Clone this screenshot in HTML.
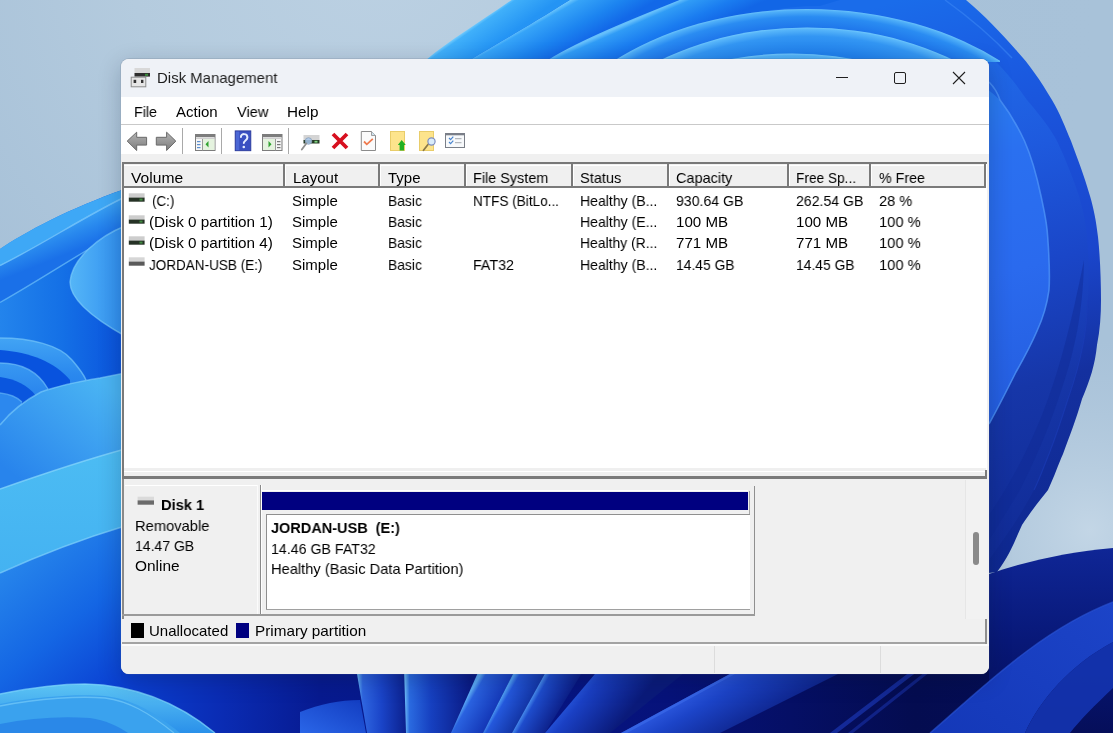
<!DOCTYPE html>
<html><head><meta charset="utf-8">
<style>
html,body{margin:0;padding:0;width:1113px;height:733px;overflow:hidden;font-family:"Liberation Sans",sans-serif;background:#a9c3da;}
#bg{position:absolute;left:0;top:0;width:1113px;height:733px;}
#win{position:absolute;left:121px;top:59px;width:868px;height:615px;border-radius:8px;overflow:hidden;background:#f0f0f0;}
#wb{position:absolute;left:120px;top:58px;width:870px;height:617px;border-radius:9px;background:rgba(60,70,90,0.2);box-shadow:0 6px 22px rgba(10,25,50,0.22);}
.t{position:absolute;white-space:pre;color:#000;will-change:transform;}
.a{position:absolute;}
</style></head><body>
<svg id="bg" width="1113" height="733" viewBox="0 0 1113 733">
<defs>
  <linearGradient id="sky" x1="0" y1="0" x2="1" y2="1">
    <stop offset="0" stop-color="#bdd2e3"/>
    <stop offset="0.5" stop-color="#b4cbde"/>
    <stop offset="1" stop-color="#bed2e3"/>
  </linearGradient>
  <linearGradient id="r1" x1="0" y1="0" x2="1" y2="0">
    <stop offset="0" stop-color="#5cbafa"/>
    <stop offset="0.3" stop-color="#3ea5f6"/>
    <stop offset="1" stop-color="#2b90f0"/>
  </linearGradient>
  <linearGradient id="r2" x1="0" y1="0" x2="1" y2="0">
    <stop offset="0" stop-color="#2f95f2"/>
    <stop offset="0.5" stop-color="#1f7de9"/>
    <stop offset="1" stop-color="#1a66e2"/>
  </linearGradient>
  <linearGradient id="domeg" x1="0" y1="0" x2="0" y2="1">
    <stop offset="0" stop-color="#2a88ee"/>
    <stop offset="1" stop-color="#1f78ea"/>
  </linearGradient>
  <linearGradient id="lb" x1="0" y1="0" x2="1" y2="0">
    <stop offset="0" stop-color="#2384ec"/>
    <stop offset="0.5" stop-color="#1470e6"/>
    <stop offset="1" stop-color="#0a52dc"/>
  </linearGradient>
  <linearGradient id="bigpet" gradientUnits="userSpaceOnUse" x1="100" y1="380" x2="20" y2="480"><stop offset="0" stop-color="#4ab4f3"/><stop offset="0.5" stop-color="#3a9cf0"/><stop offset="1" stop-color="#2884ec"/></linearGradient>
  <linearGradient id="lowl" x1="0" y1="0" x2="0.5" y2="1">
    <stop offset="0" stop-color="#2e92ee"/>
    <stop offset="0.6" stop-color="#1466e4"/>
    <stop offset="1" stop-color="#0a40d2"/>
  </linearGradient>
  <linearGradient id="bot" gradientUnits="userSpaceOnUse" x1="121" y1="0" x2="1113" y2="0"><stop offset="0" stop-color="#0a40d2"/><stop offset="0.1" stop-color="#0a2cb4"/><stop offset="0.2" stop-color="#071a90"/><stop offset="0.55" stop-color="#06127a"/><stop offset="0.8" stop-color="#040c50"/><stop offset="1" stop-color="#060e58"/></linearGradient>
  <linearGradient id="cyan" x1="0" y1="0" x2="0" y2="1">
    <stop offset="0" stop-color="#5cc4f4"/>
    <stop offset="1" stop-color="#2a90ea"/>
  </linearGradient>
  <linearGradient id="rb" x1="0" y1="0" x2="0" y2="1">
    <stop offset="0" stop-color="#0f2696"/>
    <stop offset="0.5" stop-color="#081878"/>
    <stop offset="1" stop-color="#050e5a"/>
  </linearGradient>
  <linearGradient id="ribb" x1="0" y1="1" x2="1" y2="0">
    <stop offset="0" stop-color="#1438b8"/>
    <stop offset="1" stop-color="#1c44c8"/>
  </linearGradient>
  <linearGradient id="bulge" x1="0" y1="0" x2="1" y2="0">
    <stop offset="0" stop-color="#55b6f7"/>
    <stop offset="1" stop-color="#2f8ef0"/>
  </linearGradient>
  <linearGradient id="arc1" x1="0" y1="0" x2="0" y2="1">
    <stop offset="0" stop-color="#42a4f4"/>
    <stop offset="0.4" stop-color="#2a88ee"/>
    <stop offset="1" stop-color="#1a6ee8"/>
  </linearGradient>
  <linearGradient id="arc2" x1="0" y1="0" x2="0" y2="1">
    <stop offset="0" stop-color="#3898f2"/>
    <stop offset="1" stop-color="#1a70e8"/>
  </linearGradient>
  <linearGradient id="cyanp" x1="0" y1="0" x2="0" y2="1">
    <stop offset="0" stop-color="#4cbcf3"/>
    <stop offset="1" stop-color="#3aa6f0"/>
  </linearGradient>
  <linearGradient id="outerg" x1="0" y1="0" x2="0" y2="1">
    <stop offset="0" stop-color="#1b56da"/>
    <stop offset="0.45" stop-color="#1a48d0"/>
    <stop offset="0.75" stop-color="#1536b4"/>
    <stop offset="1" stop-color="#1232a8"/>
  </linearGradient>
  <linearGradient id="midg" x1="0" y1="0" x2="0" y2="1">
    <stop offset="0" stop-color="#1e60e4"/>
    <stop offset="0.5" stop-color="#1a48cc"/>
    <stop offset="0.8" stop-color="#12309c"/>
    <stop offset="1" stop-color="#12309c"/>
  </linearGradient>
  <linearGradient id="p0" gradientUnits="userSpaceOnUse" x1="900" y1="0" x2="1050" y2="560"><stop offset="0" stop-color="#1a6cea"/><stop offset="0.15" stop-color="#1a5ce2"/><stop offset="0.3" stop-color="#1a50d8"/><stop offset="0.5" stop-color="#1a46cc"/><stop offset="0.7" stop-color="#14309f"/><stop offset="1" stop-color="#0e2890"/></linearGradient>
  <linearGradient id="p1" gradientUnits="userSpaceOnUse" x1="900" y1="0" x2="1050" y2="560"><stop offset="0" stop-color="#2080ee"/><stop offset="0.15" stop-color="#2068e6"/><stop offset="0.3" stop-color="#1e5ade"/><stop offset="0.5" stop-color="#1a46c8"/><stop offset="0.7" stop-color="#1636a8"/><stop offset="1" stop-color="#102a94"/></linearGradient>
  <linearGradient id="p2" gradientUnits="userSpaceOnUse" x1="900" y1="0" x2="1050" y2="560"><stop offset="0" stop-color="#3394f2"/><stop offset="0.15" stop-color="#2a80f0"/><stop offset="0.3" stop-color="#2a70f0"/><stop offset="0.5" stop-color="#2a6aee"/><stop offset="1" stop-color="#1e50d0"/></linearGradient>
  <linearGradient id="p3" gradientUnits="userSpaceOnUse" x1="700" y1="0" x2="1100" y2="560">
    <stop offset="0" stop-color="#48acf7"/><stop offset="0.35" stop-color="#2a70f0"/><stop offset="0.55" stop-color="#2a66ea"/><stop offset="1" stop-color="#1e50d0"/>
  </linearGradient>
  <clipPath id="topclip"><rect x="0" y="0" width="1000" height="62"/></clipPath>
  <linearGradient id="gR1" gradientUnits="userSpaceOnUse" x1="468" y1="29" x2="484" y2="52">
    <stop offset="0" stop-color="#74ccfd"/><stop offset="0.12" stop-color="#40b0fa"/><stop offset="1" stop-color="#2494f4"/>
  </linearGradient>
  <linearGradient id="gR2" gradientUnits="userSpaceOnUse" x1="520" y1="29" x2="541" y2="66">
    <stop offset="0" stop-color="#6cc6fc"/><stop offset="0.1" stop-color="#36a4f8"/><stop offset="0.6" stop-color="#1c84f0"/><stop offset="1" stop-color="#1268e8"/>
  </linearGradient>
  <linearGradient id="gR3" gradientUnits="userSpaceOnUse" x1="614" y1="29" x2="628" y2="61">
    <stop offset="0" stop-color="#66c0fb"/><stop offset="0.12" stop-color="#309cf6"/><stop offset="0.6" stop-color="#1a7cf0"/><stop offset="1" stop-color="#1266e6"/>
  </linearGradient>
  <radialGradient id="gDA" gradientUnits="userSpaceOnUse" cx="807" cy="200" r="191" gradientTransform="translate(807 200) scale(1.476 1) translate(-807 -200)">
    <stop offset="0.88" stop-color="#1a6ee8"/><stop offset="0.96" stop-color="#2a8cf2"/><stop offset="0.99" stop-color="#4eaef8"/><stop offset="1" stop-color="#6ac2fb"/>
  </radialGradient>
  <radialGradient id="gDB" gradientUnits="userSpaceOnUse" cx="807" cy="200" r="172.5" gradientTransform="translate(807 200) scale(1.45 1) translate(-807 -200)">
    <stop offset="0.85" stop-color="#2080ec"/><stop offset="0.95" stop-color="#3396f3"/><stop offset="0.99" stop-color="#58b6fa"/><stop offset="1" stop-color="#70c8fc"/>
  </radialGradient>
  <radialGradient id="gDC" gradientUnits="userSpaceOnUse" cx="792" cy="200" r="146.5" gradientTransform="translate(792 200) scale(1.5 1) translate(-792 -200)">
    <stop offset="0.9" stop-color="#40a6f6"/><stop offset="0.985" stop-color="#52b2f8"/><stop offset="1" stop-color="#72c8fc"/>
  </radialGradient>
  <linearGradient id="gW" x1="0" y1="1" x2="1" y2="0">
    <stop offset="0" stop-color="#2a66e8"/><stop offset="1" stop-color="#123cc0"/>
  </linearGradient>
  <linearGradient id="gM1" gradientUnits="userSpaceOnUse" x1="358" y1="700" x2="405" y2="700">
    <stop offset="0" stop-color="#62b0f4"/><stop offset="0.1" stop-color="#2f66e0"/><stop offset="0.5" stop-color="#1a44c8"/><stop offset="1" stop-color="#0c2290"/>
  </linearGradient>
  <linearGradient id="gM2" gradientUnits="userSpaceOnUse" x1="405" y1="700" x2="470" y2="700">
    <stop offset="0" stop-color="#6ab8f6"/><stop offset="0.07" stop-color="#2a6ae0"/><stop offset="0.4" stop-color="#1640c0"/><stop offset="1" stop-color="#0a1a84"/>
  </linearGradient>
  <linearGradient id="gM3" gradientUnits="userSpaceOnUse" x1="466" y1="700" x2="492" y2="715">
    <stop offset="0" stop-color="#5aa8f4"/><stop offset="0.15" stop-color="#2a62e0"/><stop offset="1" stop-color="#1438b8"/>
  </linearGradient>
  <linearGradient id="gM4" gradientUnits="userSpaceOnUse" x1="500" y1="700" x2="526" y2="715">
    <stop offset="0" stop-color="#4e9cf2"/><stop offset="0.15" stop-color="#2458dc"/><stop offset="1" stop-color="#10309e"/>
  </linearGradient>
  <linearGradient id="gM5" gradientUnits="userSpaceOnUse" x1="530" y1="700" x2="560" y2="717">
    <stop offset="0" stop-color="#4a90ee"/><stop offset="0.15" stop-color="#1e4ccc"/><stop offset="1" stop-color="#0a1a80"/>
  </linearGradient>
  <linearGradient id="gM6" gradientUnits="userSpaceOnUse" x1="572" y1="700" x2="650" y2="745">
    <stop offset="0" stop-color="#3a70e0"/><stop offset="0.08" stop-color="#1a40c4"/><stop offset="0.6" stop-color="#10289a"/><stop offset="1" stop-color="#081670"/>
  </linearGradient>
  <linearGradient id="gM7" gradientUnits="userSpaceOnUse" x1="730" y1="700" x2="800" y2="740">
    <stop offset="0" stop-color="#1a3cc0"/><stop offset="1" stop-color="#0a1c7a"/>
  </linearGradient>
  <radialGradient id="sky2" gradientUnits="userSpaceOnUse" cx="380" cy="-60" r="720">
    <stop offset="0" stop-color="#bcd1e3"/><stop offset="0.35" stop-color="#b4cbde"/><stop offset="0.7" stop-color="#a7c1d8"/><stop offset="1" stop-color="#a8c2d9"/>
  </radialGradient>
  <radialGradient id="sky3" gradientUnits="userSpaceOnUse" cx="1090" cy="530" r="190">
    <stop offset="0" stop-color="#c3d6e6" stop-opacity="1"/><stop offset="1" stop-color="#b4cadd" stop-opacity="0"/>
  </radialGradient>
  <linearGradient id="bandB" gradientUnits="userSpaceOnUse" x1="60" y1="222" x2="72" y2="252"><stop offset="0" stop-color="#3aa2f4"/><stop offset="0.5" stop-color="#2888ee"/><stop offset="1" stop-color="#1a70e8"/></linearGradient>
  <linearGradient id="gX1" gradientUnits="userSpaceOnUse" x1="565" y1="698" x2="610" y2="735"><stop offset="0" stop-color="#2a5ce0"/><stop offset="0.25" stop-color="#1a40c4"/><stop offset="1" stop-color="#0a1a7a"/></linearGradient>
  <linearGradient id="gX2" gradientUnits="userSpaceOnUse" x1="680" y1="700" x2="720" y2="770"><stop offset="0" stop-color="#2a56dc"/><stop offset="0.2" stop-color="#1c44c8"/><stop offset="1" stop-color="#06126a"/></linearGradient>
</defs>
<rect width="1113" height="733" fill="url(#sky2)"/>
<rect x="900" y="300" width="213" height="300" fill="url(#sky3)"/>

<!-- ===== top-right petal ===== -->
<path d="M515 0 C484 22 455 40 432 60 L420 640 L997 572 C1010 555 1015 540 1022 525 C1032 510 1040 500 1048 490 C1055 475 1058 465 1063 454 C1070 435 1076 420 1082 399 C1090 380 1095 365 1097 345 C1100 330 1101 315 1101 300 C1101 280 1100 255 1098 237 C1096 220 1094 210 1090 196 C1084 175 1078 160 1071 141 C1065 127 1060 113 1052 100 C1040 80 1030 65 1016 50 C1000 32 985 16 966 0 Z" fill="url(#p0)"/>
<path d="M945 0 C970 18 995 40 1012 58" stroke="#3a86f4" stroke-width="1.4" fill="none" opacity="0.6"/>
<!-- P1: dome A + edge 2 (middle band) -->
<path d="M615 60 C660 36 740 9 807 9 C880 10 950 30 992 58 C1005 70 1017 85 1027 100 C1040 115 1050 128 1057 141 C1066 160 1073 178 1079 196 C1083 210 1086 222 1087 237 C1089 260 1089 280 1088 300 C1087 318 1086 330 1083 345 C1079 365 1074 382 1068 399 C1062 418 1056 436 1049 454 C1044 466 1040 478 1034 490 C1026 505 1018 518 1010 530 L989 560 L600 600 Z" fill="url(#p1)"/>
<!-- thin lighter line inside outer band -->
<path d="M1088 300 C1087 318 1086 330 1083 345 C1079 365 1074 382 1068 399 C1062 418 1056 436 1049 454 C1044 466 1040 478 1034 490" stroke="#1a3cb8" stroke-width="1.2" fill="none" opacity="0.6"/>
<!-- darker stripe in middle band (lower) -->
<path d="M1084 260 C1083 320 1072 360 1058 400 C1048 430 1035 460 1020 490 L989 540 L989 515 C1010 485 1028 450 1042 415 C1058 375 1070 330 1084 260 Z" fill="#102a94" opacity="0.45"/>
<!-- P2: dome B + edge 3 (inner bright) -->
<path d="M658 60 C690 48 750 27 807 27.5 C860 28 910 42 940 60 C960 72 985 85 1000 100 C1010 113 1018 127 1024.5 141 C1032 158 1037 177 1041 196 C1044 210 1047 222 1047.7 237 C1049 255 1050 275 1049 290 C1047 305 1043 318 1037 331 C1031 345 1024 358 1016 372 C1008 388 998 408 989 424 L600 600 Z" fill="url(#p2)"/>
<path d="M658 60 C690 48 750 27 807 27.5 C860 28 910 42 940 60" stroke="#68c0fb" stroke-width="1.5" fill="none" opacity="0.75"/>
<path d="M989 82 C995 88 998 94 1000 100 C1010 113 1018 127 1024.5 141 C1032 158 1037 177 1041 196 C1044 210 1047 222 1047.7 237 C1049 255 1050 275 1049 290 C1047 305 1043 318 1037 331 C1031 345 1024 358 1016 372 C1008 388 998 408 989 424" stroke="#4f96f8" stroke-width="1.6" fill="none" opacity="0.75"/>
<!-- P3: dome C -->
<path d="M725 60 C750 56 770 53.5 792 53.5 C815 54 835 56 855 60 Z" fill="#48acf7"/>

<!-- top ribbons -->
<path d="M569.7 0 C530 25 500 42 470 60 L548 60 C580 40 630 20 679.6 0 Z" fill="url(#gR2)"/>
<path d="M679.6 0 C630 20 580 40 548 60 L615 60 C650 42 700 22 760 12 C780 8 800 6 820 6 L840 0 Z" fill="url(#gR3)"/>
<path d="M511.6 0 C480 22 450 40 426 60 L470 60 C500 42 530 25 569.7 0 Z" fill="url(#gR1)"/>
<g clip-path="url(#topclip)">
<ellipse cx="807" cy="200" rx="282" ry="191" fill="url(#gDA)"/>
<ellipse cx="807" cy="200" rx="250" ry="172.5" fill="url(#gDB)"/>
<ellipse cx="792" cy="200" rx="220" ry="146.5" fill="url(#gDC)"/>
</g>

<!-- ===== left band ===== -->
<path d="M0 249 C25 232 70 208 125 189 L125 733 L0 733 Z" fill="url(#lb)"/>
<path d="M0 249 C25 232 70 208 125 189 L125 197 C85 216 40 246 0 265.5 Z" fill="#3ea8f6"/>
<path d="M0 265.5 C40 246 85 216 125 197 L125 228 C85 250 40 280 0 302.5 Z" fill="url(#bandB)"/>
<path d="M0 265.5 C40 246 85 216 125 197" stroke="#80ccfc" stroke-width="1.4" fill="none" opacity="0.75"/>
<path d="M0 302.5 C40 280 85 250 125 228" stroke="#6cc0fa" stroke-width="1.4" fill="none" opacity="0.7"/>
<!-- bulge petal -->
<path d="M125 226 C100 236 72 258 70 282 C70 302 100 322 125 336 Z" fill="url(#bulge)"/>
<path d="M125 226 C100 236 72 258 70 282 C70 302 100 322 125 336" stroke="#80d0fb" stroke-width="1.5" fill="none" opacity="0.6"/>
<!-- arcs -->
<path d="M0 338 C30 338 60 345 72 360 C78 367 83 373 86 380 L86 430 L0 430 Z" fill="url(#arc1)"/>
<path d="M0 338 C30 338 60 345 72 360 C78 367 83 373 86 380" stroke="#74c4fa" stroke-width="1.5" fill="none" opacity="0.7"/>
<path d="M0 350 C30 352 55 362 70 380 L70 430 L0 430 Z" fill="#0853de"/>
<path d="M0 363 C16 363 36 368 48 389 L48 430 L0 430 Z" fill="url(#arc2)"/>
<path d="M0 363 C16 363 36 368 48 389" stroke="#6cbcf8" stroke-width="1.4" fill="none" opacity="0.7"/>
<path d="M0 377 C15 379 28 385 36 396 L36 430 L0 430 Z" fill="#0a56de"/>
<path d="M0 393 C10 394 17 397 22 402 L22 430 L0 430 Z" fill="#2c88ee"/>
<path d="M0 393 C10 394 17 397 22 402" stroke="#6cbcf8" stroke-width="1.3" fill="none" opacity="0.6"/>
<!-- big light petal -->
<path d="M0 425 C8 415 20 403 41 392 C55 387 70 383 100 378 L125 373 L125 733 L0 733 Z" fill="url(#bigpet)"/>
<path d="M0 425 C8 415 20 403 41 392 C55 387 70 383 100 378 L125 373" stroke="#80d0fb" stroke-width="1.5" fill="none" opacity="0.6"/>
<path d="M0 489 C40 475 85 460 125 449 L125 733 L0 733 Z" fill="url(#cyanp)"/>
<path d="M0 489 C40 475 85 460 125 449" stroke="#8ad8fc" stroke-width="1.5" fill="none" opacity="0.7"/>
<path d="M0 573 C40 555 85 538 125 526 L125 733 L0 733 Z" fill="url(#lowl)"/>
<path d="M0 573 C40 555 85 538 125 526" stroke="#80d0fb" stroke-width="1.5" fill="none" opacity="0.7"/>

<!-- ===== bottom band ===== -->
<rect x="121" y="668" width="992" height="65" fill="url(#bot)"/>
<!-- cyan arcs bottom-left -->
<path d="M0 694 C30 688 60 684 85 684 C130 685 175 700 215 733 L0 733 Z" fill="url(#cyan)"/>
<path d="M0 694 C30 688 60 684 85 684 C130 685 175 700 215 733" stroke="#80d8fc" stroke-width="1.5" fill="none" opacity="0.7"/>
<path d="M0 704 C40 696 80 694 105 696 C130 699 152 710 180 733 L0 733 Z" fill="#3aa2ee"/>
<path d="M0 706 C40 698 80 696 105 698 C128 701 148 712 174 733" stroke="#7fd0fa" stroke-width="1.3" fill="none" opacity="0.6"/>
<path d="M0 724 C30 718 60 716 90 718 C105 720 118 726 128 733 L0 733 Z" fill="#2a88e8"/>
<!-- middle ribbons -->
<path d="M300 733 L300 712 C320 704 340 700 360 700 L366 733 Z" fill="url(#gW)"/>
<path d="M356 668 L404 668 L406 733 L367 733 Z" fill="url(#gM1)"/>
<path d="M404 668 L482 668 L452 733 L406 733 Z" fill="url(#gM2)"/>
<path d="M480 668 L516 668 L483 733 L451 733 Z" fill="url(#gM3)"/>
<path d="M516 668 L548 668 L512 733 L483 733 Z" fill="url(#gM4)"/>
<path d="M548 668 L585 668 L545 733 L512 733 Z" fill="url(#gM5)"/>
<path d="M545 733 L600 668 L690 668 L610 733 Z" fill="url(#gX1)"/>
<path d="M621 733 L741 668 L850 668 L720 733 Z" fill="url(#gX2)"/>
<path d="M621 733 L741 668 L746 668 L627 733 Z" fill="#3a6ae8" opacity="0.7"/>
<path d="M830 733 L915 668 L922 668 L837 733 Z" fill="#1e3cc0" opacity="0.6"/>
<path d="M848 733 L930 668 L935 668 L853 733 Z" fill="#1e3cc0" opacity="0.45"/>

<!-- ===== right lower ===== -->
<path d="M989 574 C1030 560 1070 552 1113 548 L1113 733 L989 733 Z" fill="url(#rb)"/>
<path d="M930 733 C980 690 1040 630 1113 602 L1113 642 C1070 665 1040 700 1025 733 Z" fill="url(#ribb)"/>
<path d="M930 733 C980 690 1040 630 1113 602" stroke="#2c56d8" stroke-width="1.5" fill="none" opacity="0.6"/>
<path d="M1025 733 C1040 700 1070 665 1113 642 L1113 688 C1095 705 1080 720 1070 733 Z" fill="#1434b0" opacity="0.9"/>
</svg>

<div id="wb"></div>
<div id="win">
<div class="a" style="left:0px;top:0px;width:868px;height:38px;background:#eff2f7;"></div>
<svg class="a" style="left:9px;top:8px" width="22" height="22" viewBox="0 0 22 22">
<rect x="4.5" y="1" width="15.5" height="5.5" fill="#d8d8d8"/>
<rect x="4.5" y="6" width="15.5" height="3.6" fill="#2e2e2e"/>
<rect x="15" y="6.8" width="3" height="2" fill="#3b8a3b"/>
<rect x="1.2" y="10.2" width="14.6" height="9.6" fill="#e6e6e6" stroke="#8c8c8c" stroke-width="1"/>
<rect x="3.6" y="12.8" width="2.6" height="3.2" fill="#333"/>
<rect x="11" y="12.8" width="2.4" height="3.2" fill="#333"/>
</svg>
<div class="t" style="left:35.80px;top:10.70px;font-size:15px;line-height:15px;color:#1c1c1c;transform:scaleX(0.9958);transform-origin:0 0;">Disk Management</div>
<div class="a" style="left:715px;top:18px;width:12px;height:1px;background:#1f1f1f;"></div>
<div class="a" style="left:773px;top:13px;width:12px;height:12px;background:transparent;border:1px solid #1f1f1f;border-radius:2px;box-sizing:border-box;"></div>
<svg class="a" style="left:831px;top:12px" width="14" height="14" viewBox="0 0 14 14">
<path d="M1 1 L13 13 M13 1 L1 13" stroke="#1f1f1f" stroke-width="1.1" fill="none"/></svg>
<div class="a" style="left:0px;top:38px;width:868px;height:27px;background:#ffffff;"></div>
<div class="t" style="left:12.60px;top:45.20px;font-size:15px;line-height:15px;color:#000;transform:scaleX(0.9521);transform-origin:0 0;">File</div>
<div class="t" style="left:54.70px;top:45.20px;font-size:15px;line-height:15px;color:#000;transform:scaleX(0.9931);transform-origin:0 0;">Action</div>
<div class="t" style="left:115.70px;top:45.20px;font-size:15px;line-height:15px;color:#000;transform:scaleX(0.9741);transform-origin:0 0;">View</div>
<div class="t" style="left:165.70px;top:45.20px;font-size:15px;line-height:15px;color:#000;transform:scaleX(1.0180);transform-origin:0 0;">Help</div>
<div class="a" style="left:0px;top:65px;width:868px;height:1.4px;background:#c9c9c9;"></div>
<div class="a" style="left:0px;top:66px;width:868px;height:29px;background:#ffffff;"></div>
<div class="a" style="left:0px;top:95px;width:868px;height:8px;background:#f0f0f0;"></div>
<div class="a" style="left:61px;top:69px;width:1px;height:26px;background:#a9a9a9;"></div>
<div class="a" style="left:100px;top:69px;width:1px;height:26px;background:#a9a9a9;"></div>
<div class="a" style="left:167px;top:69px;width:1px;height:26px;background:#a9a9a9;"></div>
<svg class="a" style="left:5px;top:72px" width="22" height="22" viewBox="0 0 22 22"><defs><linearGradient id="ag" x1="0" y1="0" x2="0" y2="1"><stop offset="0" stop-color="#b4b4b4"/><stop offset="1" stop-color="#7c7c7c"/></linearGradient></defs>
<path d="M1.2 10.1 L10.7 1.2 L10.7 6.3 L20.6 6.3 L20.6 14.1 L10.7 14.1 L10.7 19.5 Z" fill="url(#ag)" stroke="#6a6a6a" stroke-width="1" stroke-linejoin="round"/></svg>
<svg class="a" style="left:34px;top:72px" width="22" height="22" viewBox="0 0 22 22"><path d="M1.3 6.3 L11.6 6.3 L11.6 1.2 L20.8 10.1 L11.6 19.5 L11.6 14.1 L1.3 14.1 Z" fill="url(#ag)" stroke="#6a6a6a" stroke-width="1" stroke-linejoin="round"/></svg>
<svg class="a" style="left:73px;top:75px" width="22" height="18" viewBox="0 0 22 18"><rect x="1.5" y="0.5" width="19.5" height="16" fill="#f6f6f6" stroke="#7d7d7d"/>
<rect x="1.5" y="0.5" width="19.5" height="2.6" fill="#7d7d7d"/>
<rect x="2" y="3.5" width="18.5" height="1.5" fill="#cfcfcf"/>
<rect x="8" y="5" width="1" height="11.5" fill="#9a9a9a"/>
<rect x="3" y="7" width="3.5" height="1.2" fill="#5d8fd0"/><rect x="3" y="10" width="3.5" height="1.2" fill="#5d8fd0"/><rect x="3" y="13" width="3.5" height="1.2" fill="#5d8fd0"/>
<rect x="9" y="5" width="11.5" height="11" fill="#e5f3df"/>
<path d="M11.5 10.3 L14.5 7 L14.5 13.6 Z" fill="#2fa32f"/></svg>
<svg class="a" style="left:113px;top:71px" width="18" height="22" viewBox="0 0 18 22"><rect x="1.2" y="0.9" width="15.6" height="19.8" fill="#3a50c2" stroke="#28389a" stroke-width="0.9"/>
<rect x="2" y="1.5" width="3.2" height="18.6" fill="#5a7ae6" opacity="0.55"/>
<path d="M6.9 7 C6.9 3.2 13.4 3 13.4 7.4 C13.4 10.4 9.8 10.4 9.8 13.0" stroke="#e4ecff" stroke-width="2" fill="none" stroke-linecap="round"/>
<circle cx="9.8" cy="17.0" r="1.3" fill="#e4ecff"/></svg>
<svg class="a" style="left:140px;top:75px" width="22" height="18" viewBox="0 0 22 18"><rect x="1.5" y="0.5" width="19.5" height="16" fill="#f6f6f6" stroke="#7d7d7d"/>
<rect x="1.5" y="0.5" width="19.5" height="2.6" fill="#7d7d7d"/>
<rect x="2" y="3.5" width="18.5" height="1.5" fill="#cfcfcf"/>
<rect x="14" y="5" width="1" height="11.5" fill="#9a9a9a"/>
<rect x="16" y="7" width="3.5" height="1.2" fill="#777"/><rect x="16" y="10" width="3.5" height="1.2" fill="#777"/><rect x="16" y="13" width="3.5" height="1.2" fill="#777"/>
<rect x="2" y="5" width="12" height="11" fill="#e5f3df"/>
<path d="M10.5 10.3 L7.5 7 L7.5 13.6 Z" fill="#2fa32f"/></svg>
<svg class="a" style="left:179px;top:74px" width="22" height="19" viewBox="0 0 22 19"><rect x="3.5" y="2" width="16" height="5.5" fill="#d4d4d4"/>
<rect x="3.5" y="7" width="16" height="3.5" fill="#253a25"/>
<rect x="14.5" y="7.8" width="3" height="1.8" fill="#7fd37f"/>
<circle cx="8.5" cy="8" r="3.3" fill="#a8c8ec" fill-opacity="0.85" stroke="#8aa0b8" stroke-width="0.8"/>
<path d="M6.3 10.5 L1.8 16.5" stroke="#8f8f8f" stroke-width="1.8" stroke-linecap="round"/></svg>
<svg class="a" style="left:209px;top:72px" width="20" height="20" viewBox="0 0 20 20"><path d="M3 3 L17 17 M17 3 L3 17" stroke="#d7101f" stroke-width="3.8" stroke-linecap="butt"/></svg>
<svg class="a" style="left:239px;top:71px" width="17" height="22" viewBox="0 0 17 22"><path d="M1.3 1.5 L11.5 1.5 L15.5 5.5 L15.5 20.5 L1.3 20.5 Z" fill="#fbfbfb" stroke="#8c8c8c" stroke-width="1"/>
<path d="M11.5 1.5 L11.5 5.5 L15.5 5.5" fill="#cfe3ef" stroke="#8c8c8c" stroke-width="0.8"/>
<path d="M4 11.5 L6.8 14.3 L12.8 8.8" stroke="#ef7b4f" stroke-width="1.8" fill="none"/></svg>
<svg class="a" style="left:268px;top:71px" width="19" height="22" viewBox="0 0 19 22"><rect x="1.5" y="1.5" width="14" height="19" fill="#fde48c" stroke="#e9cd6a" stroke-width="1"/>
<path d="M8.8 15 L12.7 10 L16.8 15 L15 15 L15 20.6 L10.6 20.6 L10.6 15 Z" fill="#22b022"/></svg>
<svg class="a" style="left:297px;top:71px" width="20" height="22" viewBox="0 0 20 22"><rect x="1.5" y="1.5" width="14" height="19" fill="#fde48c" stroke="#e9cd6a" stroke-width="1"/>
<path d="M10 14.5 L5.5 20.2" stroke="#8c7a48" stroke-width="1.8" stroke-linecap="round"/>
<circle cx="13.5" cy="11.5" r="3.6" fill="#d9ecfa" stroke="#7f8fc0" stroke-width="1.2"/></svg>
<svg class="a" style="left:323px;top:73px" width="22" height="17" viewBox="0 0 22 17"><rect x="1.5" y="1.5" width="19" height="14" fill="#f7f9fb" stroke="#7a7f88" stroke-width="1"/>
<rect x="1.5" y="1.5" width="19" height="1.8" fill="#7a7f88"/>
<path d="M5 6 L6.6 7.6 L9.3 4.6 M5 10 L6.6 11.6 L9.3 8.6" stroke="#4a86cf" stroke-width="1.2" fill="none"/>
<rect x="11" y="6.2" width="6.5" height="1" fill="#a4a8ae"/><rect x="11" y="10.2" width="6.5" height="1" fill="#a4a8ae"/></svg>
<div class="a" style="left:1px;top:103px;width:865px;height:317px;background:#ffffff;"></div>
<div class="a" style="left:1px;top:103.30000000000001px;width:864.5px;height:2px;background:#787878;"></div>
<div class="a" style="left:1px;top:103px;width:1.5px;height:317px;background:#7a7a7a;"></div>
<div class="a" style="left:2.5px;top:105px;width:861.5px;height:24px;background:#f0f0f0;"></div>
<div class="a" style="left:2.5px;top:105.5px;width:861.5px;height:1.5px;background:#ffffff;"></div>
<div class="a" style="left:2.5px;top:127px;width:861.5px;height:2px;background:#7a7a7a;"></div>
<div class="a" style="left:162px;top:105px;width:2px;height:24px;background:#7a7a7a;"></div>
<div class="a" style="left:164px;top:106px;width:1.3px;height:21px;background:#ffffff;"></div>
<div class="t" style="left:9.50px;top:111.00px;font-size:15px;line-height:15px;color:#000;transform:scaleX(1.0413);transform-origin:0 0;">Volume</div>
<div class="a" style="left:257px;top:105px;width:2px;height:24px;background:#7a7a7a;"></div>
<div class="a" style="left:259px;top:106px;width:1.3px;height:21px;background:#ffffff;"></div>
<div class="t" style="left:172.10px;top:111.00px;font-size:15px;line-height:15px;color:#000;transform:scaleX(1.0012);transform-origin:0 0;">Layout</div>
<div class="a" style="left:342.5px;top:105px;width:2px;height:24px;background:#7a7a7a;"></div>
<div class="a" style="left:344.5px;top:106px;width:1.3px;height:21px;background:#ffffff;"></div>
<div class="t" style="left:266.70px;top:111.00px;font-size:15px;line-height:15px;color:#000;transform:scaleX(0.9964);transform-origin:0 0;">Type</div>
<div class="a" style="left:449.5px;top:105px;width:2px;height:24px;background:#7a7a7a;"></div>
<div class="a" style="left:451.5px;top:106px;width:1.3px;height:21px;background:#ffffff;"></div>
<div class="t" style="left:351.60px;top:111.00px;font-size:15px;line-height:15px;color:#000;transform:scaleX(0.9624);transform-origin:0 0;">File System</div>
<div class="a" style="left:546px;top:105px;width:2px;height:24px;background:#7a7a7a;"></div>
<div class="a" style="left:548px;top:106px;width:1.3px;height:21px;background:#ffffff;"></div>
<div class="t" style="left:459.00px;top:111.00px;font-size:15px;line-height:15px;color:#000;transform:scaleX(0.9711);transform-origin:0 0;">Status</div>
<div class="a" style="left:666px;top:105px;width:2px;height:24px;background:#7a7a7a;"></div>
<div class="a" style="left:668px;top:106px;width:1.3px;height:21px;background:#ffffff;"></div>
<div class="t" style="left:555.10px;top:111.00px;font-size:15px;line-height:15px;color:#000;transform:scaleX(0.9664);transform-origin:0 0;">Capacity</div>
<div class="a" style="left:748px;top:105px;width:2px;height:24px;background:#7a7a7a;"></div>
<div class="a" style="left:750px;top:106px;width:1.3px;height:21px;background:#ffffff;"></div>
<div class="t" style="left:675.20px;top:111.00px;font-size:15px;line-height:15px;color:#000;transform:scaleX(0.9123);transform-origin:0 0;">Free Sp...</div>
<div class="a" style="left:862.6px;top:105px;width:2px;height:24px;background:#7a7a7a;"></div>
<div class="a" style="left:864.6px;top:106px;width:1.3px;height:21px;background:#ffffff;"></div>
<div class="t" style="left:758.20px;top:111.00px;font-size:15px;line-height:15px;color:#000;transform:scaleX(0.9491);transform-origin:0 0;">% Free</div>
<svg class="a" style="left:6.5px;top:134.3px" width="17" height="11" viewBox="0 0 17 11"><rect x="0.8" y="0.3" width="15.8" height="4.5" fill="#cdcdcd"/><rect x="0.8" y="4.6" width="15.8" height="4.1" fill="#263226"/><rect x="11.5" y="5.6" width="3" height="2" fill="#3f8a3f"/></svg>
<div class="t" style="left:31.40px;top:133.80px;font-size:15px;line-height:15px;color:#000;transform:scaleX(0.8960);transform-origin:0 0;">(C:)</div>
<div class="t" style="left:170.70px;top:133.80px;font-size:15px;line-height:15px;color:#000;transform:scaleX(0.9969);transform-origin:0 0;">Simple</div>
<div class="t" style="left:266.70px;top:133.80px;font-size:15px;line-height:15px;color:#000;transform:scaleX(0.9244);transform-origin:0 0;">Basic</div>
<div class="t" style="left:351.60px;top:133.80px;font-size:15px;line-height:15px;color:#000;transform:scaleX(0.9051);transform-origin:0 0;">NTFS (BitLo...</div>
<div class="t" style="left:459.00px;top:133.80px;font-size:15px;line-height:15px;color:#000;transform:scaleX(0.9376);transform-origin:0 0;">Healthy (B...</div>
<div class="t" style="left:555.10px;top:133.80px;font-size:15px;line-height:15px;color:#000;transform:scaleX(0.9396);transform-origin:0 0;">930.64 GB</div>
<div class="t" style="left:675.20px;top:133.80px;font-size:15px;line-height:15px;color:#000;transform:scaleX(0.9396);transform-origin:0 0;">262.54 GB</div>
<div class="t" style="left:758.20px;top:133.80px;font-size:15px;line-height:15px;color:#000;transform:scaleX(0.9765);transform-origin:0 0;">28 %</div>
<svg class="a" style="left:6.5px;top:155.57000000000002px" width="17" height="11" viewBox="0 0 17 11"><rect x="0.8" y="0.3" width="15.8" height="4.5" fill="#cdcdcd"/><rect x="0.8" y="4.6" width="15.8" height="4.1" fill="#263226"/><rect x="11.5" y="5.6" width="3" height="2" fill="#3f8a3f"/></svg>
<div class="t" style="left:27.50px;top:155.10px;font-size:15px;line-height:15px;color:#000;transform:scaleX(1.0178);transform-origin:0 0;">(Disk 0 partition 1)</div>
<div class="t" style="left:170.70px;top:155.10px;font-size:15px;line-height:15px;color:#000;transform:scaleX(0.9969);transform-origin:0 0;">Simple</div>
<div class="t" style="left:266.70px;top:155.10px;font-size:15px;line-height:15px;color:#000;transform:scaleX(0.9244);transform-origin:0 0;">Basic</div>
<div class="t" style="left:459.00px;top:155.10px;font-size:15px;line-height:15px;color:#000;transform:scaleX(0.9376);transform-origin:0 0;">Healthy (E...</div>
<div class="t" style="left:555.10px;top:155.10px;font-size:15px;line-height:15px;color:#000;transform:scaleX(1.0077);transform-origin:0 0;">100 MB</div>
<div class="t" style="left:675.20px;top:155.10px;font-size:15px;line-height:15px;color:#000;transform:scaleX(1.0077);transform-origin:0 0;">100 MB</div>
<div class="t" style="left:758.20px;top:155.10px;font-size:15px;line-height:15px;color:#000;transform:scaleX(0.9801);transform-origin:0 0;">100 %</div>
<svg class="a" style="left:6.5px;top:176.84px" width="17" height="11" viewBox="0 0 17 11"><rect x="0.8" y="0.3" width="15.8" height="4.5" fill="#cdcdcd"/><rect x="0.8" y="4.6" width="15.8" height="4.1" fill="#263226"/><rect x="11.5" y="5.6" width="3" height="2" fill="#3f8a3f"/></svg>
<div class="t" style="left:27.50px;top:176.40px;font-size:15px;line-height:15px;color:#000;transform:scaleX(1.0178);transform-origin:0 0;">(Disk 0 partition 4)</div>
<div class="t" style="left:170.70px;top:176.40px;font-size:15px;line-height:15px;color:#000;transform:scaleX(0.9969);transform-origin:0 0;">Simple</div>
<div class="t" style="left:266.70px;top:176.40px;font-size:15px;line-height:15px;color:#000;transform:scaleX(0.9244);transform-origin:0 0;">Basic</div>
<div class="t" style="left:459.00px;top:176.40px;font-size:15px;line-height:15px;color:#000;transform:scaleX(0.9283);transform-origin:0 0;">Healthy (R...</div>
<div class="t" style="left:555.10px;top:176.40px;font-size:15px;line-height:15px;color:#000;transform:scaleX(1.0077);transform-origin:0 0;">771 MB</div>
<div class="t" style="left:675.20px;top:176.40px;font-size:15px;line-height:15px;color:#000;transform:scaleX(1.0077);transform-origin:0 0;">771 MB</div>
<div class="t" style="left:758.20px;top:176.40px;font-size:15px;line-height:15px;color:#000;transform:scaleX(0.9801);transform-origin:0 0;">100 %</div>
<svg class="a" style="left:6.5px;top:198.11px" width="17" height="11" viewBox="0 0 17 11"><rect x="0.8" y="0.3" width="15.8" height="4.5" fill="#d6d6d6"/><rect x="0.8" y="4.6" width="15.8" height="4.1" fill="#5a5a5a"/></svg>
<div class="t" style="left:27.50px;top:197.70px;font-size:15px;line-height:15px;color:#000;transform:scaleX(0.9012);transform-origin:0 0;">JORDAN-USB (E:)</div>
<div class="t" style="left:170.70px;top:197.70px;font-size:15px;line-height:15px;color:#000;transform:scaleX(0.9969);transform-origin:0 0;">Simple</div>
<div class="t" style="left:266.70px;top:197.70px;font-size:15px;line-height:15px;color:#000;transform:scaleX(0.9244);transform-origin:0 0;">Basic</div>
<div class="t" style="left:351.60px;top:197.70px;font-size:15px;line-height:15px;color:#000;transform:scaleX(0.9498);transform-origin:0 0;">FAT32</div>
<div class="t" style="left:459.00px;top:197.70px;font-size:15px;line-height:15px;color:#000;transform:scaleX(0.9376);transform-origin:0 0;">Healthy (B...</div>
<div class="t" style="left:555.10px;top:197.70px;font-size:15px;line-height:15px;color:#000;transform:scaleX(0.9244);transform-origin:0 0;">14.45 GB</div>
<div class="t" style="left:675.20px;top:197.70px;font-size:15px;line-height:15px;color:#000;transform:scaleX(0.9244);transform-origin:0 0;">14.45 GB</div>
<div class="t" style="left:758.20px;top:197.70px;font-size:15px;line-height:15px;color:#000;transform:scaleX(0.9801);transform-origin:0 0;">100 %</div>
<div class="a" style="left:2.5px;top:409px;width:862px;height:8px;background:#efefef;"></div>
<div class="a" style="left:2.5px;top:412px;width:862px;height:1.3px;background:#ffffff;"></div>
<div class="a" style="left:1px;top:417px;width:865px;height:2.5px;background:#7a7a7a;"></div>
<div class="a" style="left:864px;top:411px;width:2px;height:8px;background:#7a7a7a;"></div>
<div class="a" style="left:1px;top:419.5px;width:1.5px;height:166px;background:#8a8a8a;"></div>
<div class="a" style="left:3.5px;top:425.5px;width:133px;height:130px;background:#f0f0f0;box-shadow:inset 0 1px 0 #ffffff;"></div>
<div class="a" style="left:136px;top:425.5px;width:1px;height:130px;background:#fbfbfb;"></div>
<svg class="a" style="left:16px;top:437px" width="18" height="10" viewBox="0 0 18 10"><rect x="0.6" y="0.7" width="16.4" height="4" fill="#dadada"/><rect x="0.6" y="4.4" width="16.4" height="4.3" fill="#6b6b6b"/></svg>
<div class="t" style="left:39.90px;top:438.40px;font-size:15px;line-height:15px;color:#000;font-weight:bold;transform:scaleX(0.9796);transform-origin:0 0;">Disk 1</div>
<div class="t" style="left:13.70px;top:459.10px;font-size:15px;line-height:15px;color:#000;transform:scaleX(0.9806);transform-origin:0 0;">Removable</div>
<div class="t" style="left:13.70px;top:478.70px;font-size:15px;line-height:15px;color:#000;transform:scaleX(0.9339);transform-origin:0 0;">14.47 GB</div>
<div class="t" style="left:13.70px;top:499.40px;font-size:15px;line-height:15px;color:#000;transform:scaleX(1.0286);transform-origin:0 0;">Online</div>
<div class="a" style="left:139px;top:425.5px;width:1.2px;height:130px;background:#8a8a8a;"></div>
<div class="a" style="left:140.2px;top:425.5px;width:1px;height:130px;background:#ffffff;"></div>
<div class="a" style="left:633px;top:427px;width:1.2px;height:129px;background:#909090;"></div>
<div class="a" style="left:141.2px;top:431.3px;width:486px;height:1.2px;background:#ffffff;"></div>
<div class="a" style="left:141.39999999999998px;top:432.9px;width:485.7px;height:18.3px;background:#000080;"></div>
<div class="a" style="left:628px;top:432px;width:1px;height:119px;background:#a8a8a8;"></div>
<div class="a" style="left:145px;top:455px;width:483.5px;height:95.5px;background:#ffffff;border-left:1.3px solid #8f8f8f;border-top:1.3px solid #8f8f8f;box-sizing:border-box;"></div>
<div class="a" style="left:145px;top:550px;width:484px;height:1.2px;background:#a0a0a0;"></div>
<div class="t" style="left:149.90px;top:461.40px;font-size:15px;line-height:15px;color:#000;font-weight:bold;transform:scaleX(0.9668);transform-origin:0 0;">JORDAN-USB  (E:)</div>
<div class="t" style="left:149.90px;top:481.50px;font-size:15px;line-height:15px;color:#000;transform:scaleX(0.9464);transform-origin:0 0;">14.46 GB FAT32</div>
<div class="t" style="left:149.90px;top:502.10px;font-size:15px;line-height:15px;color:#000;transform:scaleX(0.9778);transform-origin:0 0;">Healthy (Basic Data Partition)</div>
<div class="a" style="left:844px;top:421px;width:21.5px;height:139px;background:#f2f2f2;border-left:1px solid #e6e6e6;box-sizing:border-box;"></div>
<div class="a" style="left:851.8px;top:472.6px;width:6.6px;height:33px;background:#8a8a8a;border-radius:3px;"></div>
<div class="a" style="left:1px;top:555.3px;width:633px;height:1.4px;background:#9a9a9a;"></div>
<div class="a" style="left:2px;top:559.5px;width:842px;height:1px;background:#fafafa;"></div>
<div class="a" style="left:1px;top:560px;width:865px;height:25px;background:#f0f0f0;"></div>
<div class="a" style="left:1px;top:582.8px;width:865px;height:1.8px;background:#a3a3a3;"></div>
<div class="a" style="left:1px;top:585.4px;width:867px;height:1.3px;background:#fbfbfb;"></div>
<div class="a" style="left:864px;top:560px;width:1.5px;height:25px;background:#8f8f8f;"></div>
<div class="a" style="left:9.800000000000011px;top:563.7px;width:12.9px;height:15.8px;background:#000000;"></div>
<div class="t" style="left:28.20px;top:564.40px;font-size:15px;line-height:15px;color:#000;transform:scaleX(0.9998);transform-origin:0 0;">Unallocated</div>
<div class="a" style="left:115px;top:563.7px;width:12.8px;height:15.8px;background:#000080;"></div>
<div class="t" style="left:133.60px;top:564.40px;font-size:15px;line-height:15px;color:#000;transform:scaleX(1.0181);transform-origin:0 0;">Primary partition</div>
<div class="a" style="left:0px;top:586.7px;width:868px;height:29px;background:#f0f0f0;"></div>
<div class="a" style="left:592.5px;top:587px;width:1px;height:27px;background:#dcdcdc;"></div>
<div class="a" style="left:759px;top:587px;width:1px;height:27px;background:#dcdcdc;"></div>
</div>
</body></html>
